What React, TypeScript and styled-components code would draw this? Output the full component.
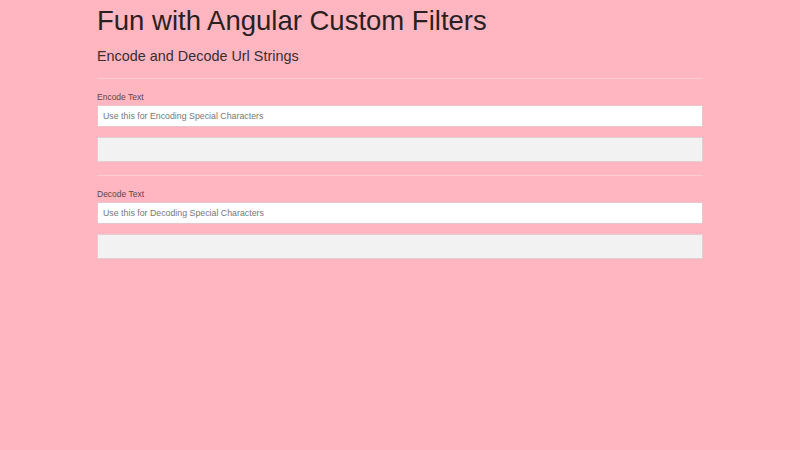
import { FC } from 'react';
import styled, { createGlobalStyle } from 'styled-components';

const GlobalStyle = createGlobalStyle`
  html, body {
    margin: 0;
    padding: 0;
    background: #ffb6c1;
  }
  body {
    font-family: "Liberation Sans", Arial, Helvetica, sans-serif;
    color: #333;
  }
`;

const Page = styled.div`
  width: 606px;
  margin: 0 auto;
  padding-top: 6px;
`;

const Title = styled.h1`
  margin: 0;
  font-size: 27.5px;
  font-weight: 400;
  line-height: 30px;
  color: #2a1f21;
`;

const Subtitle = styled.h3`
  margin: 11px 0 0;
  font-size: 14.4px;
  font-weight: 400;
  line-height: 18px;
  color: #3a2c2f;
`;

const Rule = styled.hr`
  margin: 13px 0 12px;
  border: 0;
  border-top: 1px solid #f7cdd3;
`;

const Label = styled.label`
  display: block;
  font-size: 8.5px;
  line-height: 12px;
  color: #5e454a;
  margin-bottom: 2px;
`;

const Input = styled.input`
  display: block;
  box-sizing: border-box;
  width: 100%;
  height: 22px;
  margin: 0;
  padding: 0 5px;
  border: 1px solid #e8c6cb;
  background: #fff;
  font-family: inherit;
  font-size: 8.8px;
  color: #555;
  outline: none;
  &::placeholder {
    color: #777;
  }
`;

const Output = styled.div`
  box-sizing: border-box;
  height: 25px;
  margin-top: 10px;
  border: 1px solid #e3cdd0;
  background: #f2f2f2;
`;

type SectionProps = { label: string; placeholder: string };

const Section: FC<SectionProps> = ({ label, placeholder }) => (
  <div>
    <Label>{label}</Label>
    <Input placeholder={placeholder} />
    <Output />
  </div>
);

const App: FC = () => (
  <>
    <GlobalStyle />
    <Page>
      <Title>Fun with Angular Custom Filters</Title>
      <Subtitle>Encode and Decode Url Strings</Subtitle>
      <Rule />
      <Section label="Encode Text" placeholder="Use this for Encoding Special Characters" />
      <Rule />
      <Section label="Decode Text" placeholder="Use this for Decoding Special Characters" />
    </Page>
  </>
);

export default App;
